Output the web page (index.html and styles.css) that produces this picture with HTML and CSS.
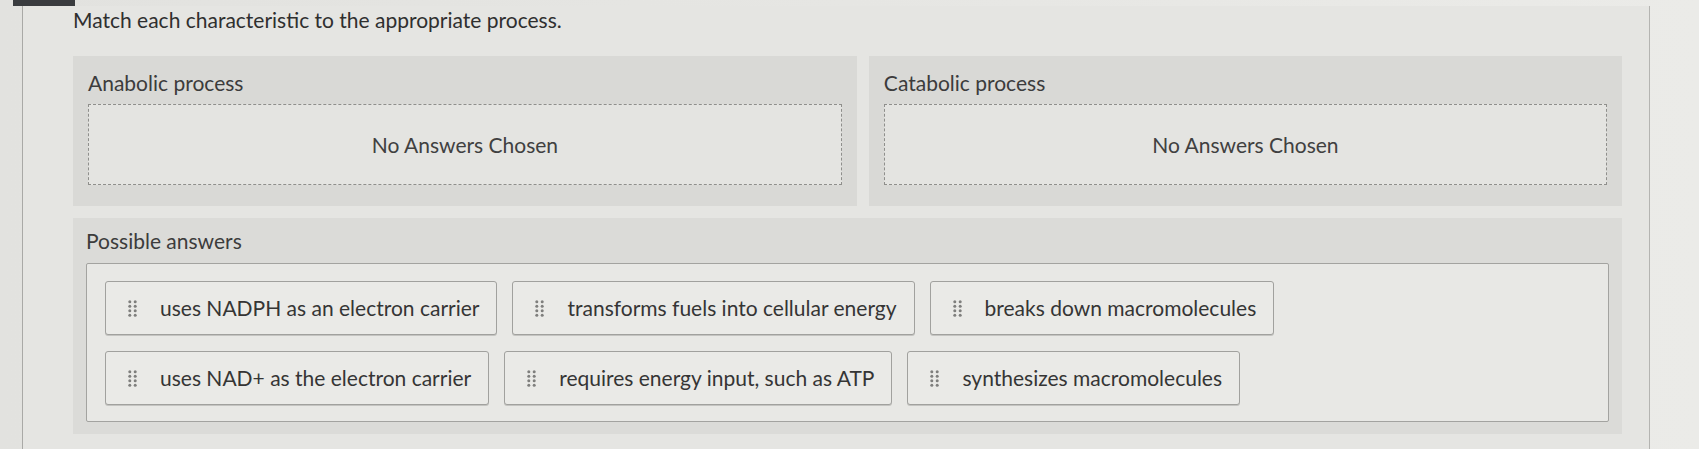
FILE: index.html
```html
<!DOCTYPE html>
<html lang="en">
<head>
  <meta charset="UTF-8" />
  <title>Match each characteristic</title>
  <link rel="stylesheet" href="styles.css">
</head>
<body>

  <div class="tab"></div>

  <div class="frame">
    <p class="prompt">Match each characteristic to the appropriate process.</p>

    <div class="targets">
      <div class="target">
        <div class="target-label">Anabolic process</div>
        <div class="dropzone">No Answers Chosen</div>
      </div>
      <div class="target">
        <div class="target-label">Catabolic process</div>
        <div class="dropzone">No Answers Chosen</div>
      </div>
    </div>

    <div class="answers">
      <div class="answers-label">Possible answers</div>
      <div class="answers-list">
        <div class="chip"><svg class="grip" width="9" height="17" viewBox="0 0 9 17"><g fill="#7f7f7d"><circle cx="1.8" cy="1.8" r="1.5"/><circle cx="7.2" cy="1.8" r="1.5"/><circle cx="1.8" cy="6.3" r="1.5"/><circle cx="7.2" cy="6.3" r="1.5"/><circle cx="1.8" cy="10.8" r="1.5"/><circle cx="7.2" cy="10.8" r="1.5"/><circle cx="1.8" cy="15.3" r="1.5"/><circle cx="7.2" cy="15.3" r="1.5"/></g></svg>uses NADPH as an electron carrier</div>
        <div class="chip"><svg class="grip" width="9" height="17" viewBox="0 0 9 17"><g fill="#7f7f7d"><circle cx="1.8" cy="1.8" r="1.5"/><circle cx="7.2" cy="1.8" r="1.5"/><circle cx="1.8" cy="6.3" r="1.5"/><circle cx="7.2" cy="6.3" r="1.5"/><circle cx="1.8" cy="10.8" r="1.5"/><circle cx="7.2" cy="10.8" r="1.5"/><circle cx="1.8" cy="15.3" r="1.5"/><circle cx="7.2" cy="15.3" r="1.5"/></g></svg>transforms fuels into cellular energy</div>
        <div class="chip"><svg class="grip" width="9" height="17" viewBox="0 0 9 17"><g fill="#7f7f7d"><circle cx="1.8" cy="1.8" r="1.5"/><circle cx="7.2" cy="1.8" r="1.5"/><circle cx="1.8" cy="6.3" r="1.5"/><circle cx="7.2" cy="6.3" r="1.5"/><circle cx="1.8" cy="10.8" r="1.5"/><circle cx="7.2" cy="10.8" r="1.5"/><circle cx="1.8" cy="15.3" r="1.5"/><circle cx="7.2" cy="15.3" r="1.5"/></g></svg>breaks down macromolecules</div>
        <div class="chip"><svg class="grip" width="9" height="17" viewBox="0 0 9 17"><g fill="#7f7f7d"><circle cx="1.8" cy="1.8" r="1.5"/><circle cx="7.2" cy="1.8" r="1.5"/><circle cx="1.8" cy="6.3" r="1.5"/><circle cx="7.2" cy="6.3" r="1.5"/><circle cx="1.8" cy="10.8" r="1.5"/><circle cx="7.2" cy="10.8" r="1.5"/><circle cx="1.8" cy="15.3" r="1.5"/><circle cx="7.2" cy="15.3" r="1.5"/></g></svg>uses NAD+ as the electron carrier</div>
        <div class="chip"><svg class="grip" width="9" height="17" viewBox="0 0 9 17"><g fill="#7f7f7d"><circle cx="1.8" cy="1.8" r="1.5"/><circle cx="7.2" cy="1.8" r="1.5"/><circle cx="1.8" cy="6.3" r="1.5"/><circle cx="7.2" cy="6.3" r="1.5"/><circle cx="1.8" cy="10.8" r="1.5"/><circle cx="7.2" cy="10.8" r="1.5"/><circle cx="1.8" cy="15.3" r="1.5"/><circle cx="7.2" cy="15.3" r="1.5"/></g></svg>requires energy input, such as ATP</div>
        <div class="chip"><svg class="grip" width="9" height="17" viewBox="0 0 9 17"><g fill="#7f7f7d"><circle cx="1.8" cy="1.8" r="1.5"/><circle cx="7.2" cy="1.8" r="1.5"/><circle cx="1.8" cy="6.3" r="1.5"/><circle cx="7.2" cy="6.3" r="1.5"/><circle cx="1.8" cy="10.8" r="1.5"/><circle cx="7.2" cy="10.8" r="1.5"/><circle cx="1.8" cy="15.3" r="1.5"/><circle cx="7.2" cy="15.3" r="1.5"/></g></svg>synthesizes macromolecules</div>
      </div>
    </div>
  </div>

</body>
</html>
```

FILE: styles.css
```css
* {
  box-sizing: border-box;
}
body {
  margin: 0;
  background: linear-gradient(to right, #e2e2df 0%, #e6e6e3 50%, #ebebe8 100%);
  font-family: 'Lato', 'Open Sans', sans-serif;
  color: #3a3a3a;
  height: 449px;
  overflow: hidden;
}
.tab {
  margin-left: 13px;
  width: 62px;
  height: 6px;
  background: #3a3c3f;
}
.frame {
  margin-left: 22px;
  width: 1628px;
  height: 443px;
  padding: 2px 27px 0 50px;
  border-left: 1px solid #a9a9a6;
  border-right: 1px solid #b4b4b1;
  background: #e5e5e2;
}
.prompt {
  margin: 0;
  font-size: 21px;
  line-height: 24px;
  color: #2f2f2f;
}
.targets {
  display: grid;
  grid-template-columns: 51fr 49fr;
  gap: 12px;
  margin-top: 24px;
}
.target {
  background: #d9d9d6;
  padding: 15px 15px 21px;
}
.target-label {
  font-size: 21px;
  line-height: 24px;
  color: #3c3c3c;
}
.dropzone {
  margin-top: 9px;
  height: 81px;
  border: 1px dashed #8f8f8c;
  background: #e4e4e1;
  display: flex;
  align-items: center;
  justify-content: center;
  font-size: 21px;
  color: #404040;
}
.answers {
  margin-top: 12px;
  background: #dbdbd8;
  padding: 11px 13px 12px;
}
.answers-label {
  font-size: 21px;
  line-height: 24px;
  color: #3c3c3c;
}
.answers-list {
  margin-top: 10px;
  border: 1px solid #a3a3a0;
  border-radius: 2px;
  background: #e8e8e5;
  padding: 17px 18px 16px;
  display: flex;
  flex-wrap: wrap;
  column-gap: 15px;
  row-gap: 16px;
}
.chip {
  display: flex;
  align-items: center;
  padding: 14px 17px 14px 22px;
  border: 1px solid #a1a19e;
  border-radius: 3px;
  background: #eaeae7;
  box-shadow: 0 1px 0 #c4c4c1;
  font-size: 21px;
  line-height: 24px;
  color: #353535;
}
.grip {
  flex: none;
  margin-right: 23px;
}
```
